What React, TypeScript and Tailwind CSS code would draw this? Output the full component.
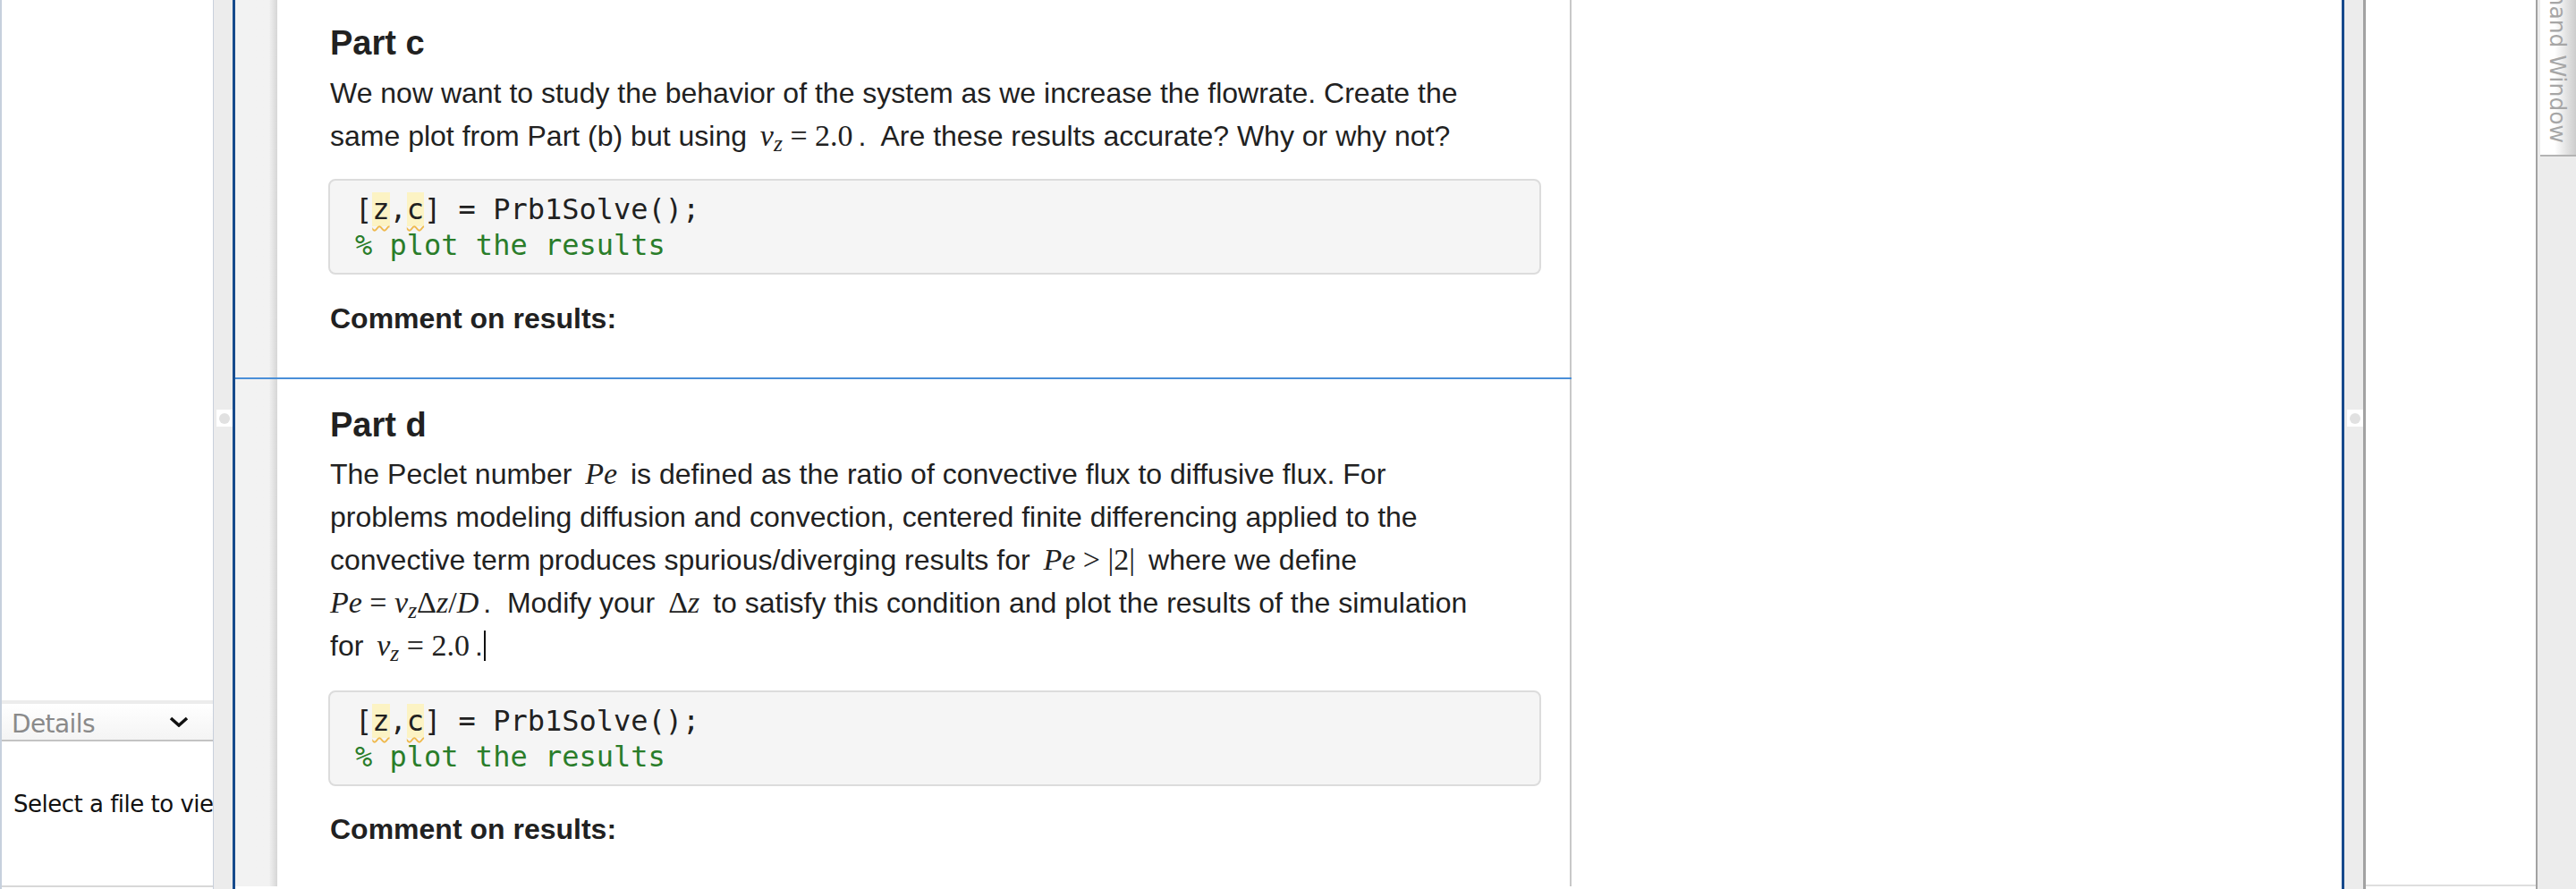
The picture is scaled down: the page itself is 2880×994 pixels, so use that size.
import React from "react";

function M({ children, first }: { children: React.ReactNode; first?: boolean }) {
  return (
    <span
      className={
        first
          ? "font-['Liberation_Serif','Times_New_Roman',serif] text-[34px] leading-none mr-[5px]"
          : "font-['Liberation_Serif','Times_New_Roman',serif] text-[34px] leading-none mx-[6px]"
      }
    >
      {children}
    </span>
  );
}

function Vz() {
  return (
    <>
      <i>v</i>
      <sub>
        <i>z</i>
      </sub>
    </>
  );
}

function Hl({ children }: { children: React.ReactNode }) {
  return (
    <span className="bg-[#fcf3c4] underline decoration-wavy decoration-[#efb94c] decoration-2 underline-offset-[7px]">
      {children}
    </span>
  );
}

function CodeBlock() {
  return (
    <div className="ml-[-2px] w-[1356px] rounded-[8px] border-2 border-[#dcdcdc] bg-[#f5f5f5] pl-[28px] pt-[12px] pb-[11px] font-['DejaVu_Sans_Mono','Liberation_Mono',monospace] text-[32px] leading-[40px] text-[#212121] whitespace-pre">
      <div>
        [<Hl>z</Hl>,<Hl>c</Hl>] = Prb1Solve();
      </div>
      <div className="text-[#2a7d2a]">% plot the results</div>
    </div>
  );
}

function Handle() {
  return (
    <div className="ml-[3px] mt-[458px] flex h-[19px] w-[18px] items-center justify-center bg-white">
      <div className="h-[12px] w-[12px] rounded-full bg-[#e1e1e1]" />
    </div>
  );
}

function Section({ top, children }: { top?: boolean; children: React.ReactNode }) {
  return (
    <div className={top ? "flex w-[1494px] border-t-2 border-[#4a8fd8]" : "flex w-[1494px]"}>
      <div className="w-[47px] shrink-0 bg-linear-to-r from-[#f2f2f2] from-80% to-[#d6d6d6]" />
      <div className="w-[1447px] shrink-0 border-r-2 border-[#c8c8c8] bg-white pl-[59px]">{children}</div>
    </div>
  );
}

export default function App() {
  return (
    <div className="flex h-[994px] w-[2880px] overflow-hidden bg-white font-['Liberation_Sans',Arial,sans-serif] text-[#212121]">
      {/* Left file panel */}
      <div className="flex w-[239px] shrink-0 flex-col border-l-2 border-r border-l-[#c6d0dd] border-r-[#c8d0dc] bg-white">
        <div className="flex-1" />
        <div className="h-[4px] bg-[#ececec]" />
        <div className="flex h-[42px] items-start justify-between border-b-2 border-[#c3c3c3] bg-linear-to-b from-white to-[#f4f4f4] pl-[11px] pr-[27px]">
          <span className="pt-[6px] font-['DejaVu_Sans',sans-serif] text-[28px] leading-[34px] tracking-[-0.6px] text-[#8a8a8a]">
            Details
          </span>
          <svg className="mt-[14px]" width="22" height="12" viewBox="0 0 22 12">
            <polyline points="2,2 11,10 20,2" fill="none" stroke="#111" strokeWidth="3.5" />
          </svg>
        </div>
        <div className="h-[161px] overflow-hidden whitespace-nowrap pl-[13px] pt-[54px] font-['DejaVu_Sans',sans-serif] text-[26px] leading-[32px] tracking-[-0.5px] text-[#111]">
          Select a file to view details
        </div>
        <div className="h-[2px] bg-[#d8d8d8]" />
        <div className="h-[2px]" />
      </div>

      {/* Left splitter */}
      <div className="w-[21px] shrink-0 bg-[#ececec]">
        <Handle />
      </div>

      {/* Live editor */}
      <div className="w-[2361px] shrink-0 overflow-hidden border-x-[3px] border-[#174a8c] bg-white">
        <Section>
          <div className="pt-[25px] pb-[42px]">
            <h2 className="mb-[9px] text-[38px] font-bold leading-[46px]">Part c</h2>
            <p className="mb-[24px] text-[32px] leading-[48px] whitespace-nowrap">
              We now want to study the behavior of the system as we increase the flowrate. Create the
              <br />
              same plot from Part (b) but using{" "}
              <M>
                <Vz /> = 2.0
              </M>
              .{"\u00a0"} Are these results accurate? Why or why not?
            </p>
            <CodeBlock />
            <p className="mt-[25px] text-[32px] font-bold leading-[48px]">Comment on results:</p>
          </div>
        </Section>
        <Section top>
          <div className="pt-[28px] pb-[40px]">
            <h2 className="mb-[8px] text-[38px] font-bold leading-[46px]">Part d</h2>
            <p className="mb-[26px] text-[32px] leading-[48px] whitespace-nowrap">
              The Peclet number{" "}
              <M>
                <i>Pe</i>
              </M>{" "}
              is defined as the ratio of convective flux to diffusive flux. For
              <br />
              problems modeling diffusion and convection, centered finite differencing applied to the
              <br />
              convective term produces spurious/diverging results for{" "}
              <M>
                <i>Pe</i> &gt; |2|
              </M>{" "}
              where we define
              <br />
              <M first>
                <i>Pe</i> = <Vz />Δ<i>z</i>/<i>D</i>
              </M>
              .{"\u00a0"} Modify your{" "}
              <M>
                Δ<i>z</i>
              </M>{" "}
              to satisfy this condition and plot the results of the simulation
              <br />
              for{" "}
              <M>
                <Vz /> = 2.0
              </M>
              .
              <span className="ml-[1px] inline-block h-[34px] w-[2px] bg-[#111] align-[-6px]" />
            </p>
            <CodeBlock />
            <p className="mt-[24px] text-[32px] font-bold leading-[48px]">Comment on results:</p>
          </div>
        </Section>
      </div>

      {/* Right splitter */}
      <div className="w-[21px] shrink-0 bg-[#ececec]">
        <Handle />
      </div>

      {/* Right panel */}
      <div className="flex w-[195px] shrink-0 flex-col border-l-[3px] border-r-2 border-[#a2a2a2] bg-white">
        <div className="flex-1" />
        <div className="mb-[3px] h-[2px] bg-[#dedede]" />
      </div>

      {/* Command Window tab strip */}
      <div className="w-[43px] shrink-0 bg-[#ececec] pl-[3px]">
        <div className="flex h-[175px] flex-col items-start justify-end overflow-hidden border-b-2 border-[#b3b3b3] bg-linear-to-r from-white from-40% to-[#cdcdcd] pb-[13px]">
          <span className="ml-[4px] whitespace-nowrap font-['DejaVu_Sans',sans-serif] text-[25px] leading-[30px] text-[#a6a6a6] [writing-mode:vertical-rl]">
            Command Window
          </span>
        </div>
      </div>
    </div>
  );
}
